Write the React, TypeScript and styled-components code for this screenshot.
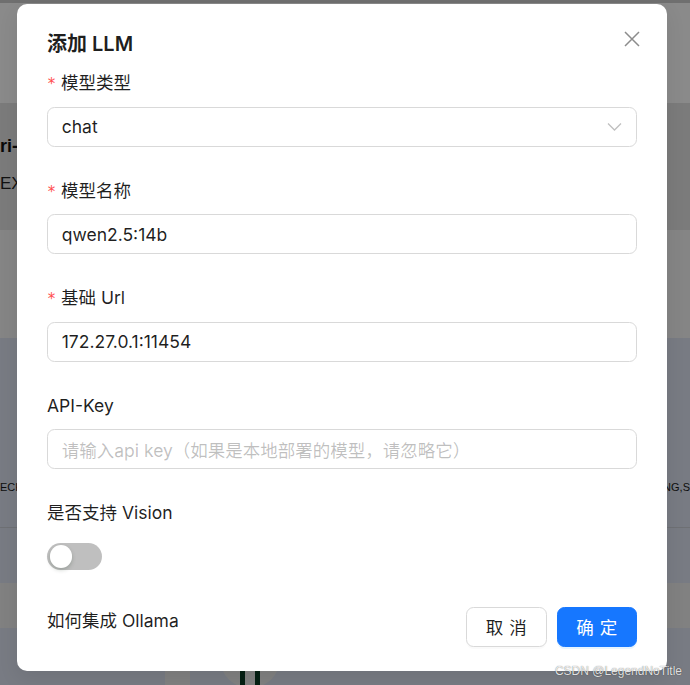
import React from "react";
import styled, { createGlobalStyle } from "styled-components";

const GlobalStyle = createGlobalStyle`
  html, body { margin: 0; padding: 0; }
  body {
    font-family: Inter, "Noto Sans CJK SC", "Noto Sans", sans-serif;
    overflow: hidden;
  }
  * { box-sizing: border-box; }
`;

/* ---------- background page ---------- */
const Page = styled.div`
  position: relative;
  width: 690px;
  height: 685px;
  display: flex;
  flex-direction: column;
  overflow: hidden;
  background: #ececec;
`;

const Band = styled.div<{ $h: number; $bg: string }>`
  height: ${(p) => p.$h}px;
  flex: none;
  background: ${(p) => p.$bg};
  display: flex;
  flex-direction: column;
  position: relative;
`;

const CardTitle = styled.div`
  margin: 31px 0 0 0;
  font: 700 18px/24px "Liberation Sans", Arial, sans-serif;
  color: #111;
  white-space: nowrap;
`;

const CardSub = styled.div`
  margin: 14px 0 0 0;
  font: 400 17px/24px "Liberation Sans", Arial, sans-serif;
  color: #222;
  white-space: nowrap;
`;

const TagRow = styled.div`
  margin-top: 142px;
  display: flex;
  justify-content: space-between;
  font: 400 11px/14px "Liberation Sans", Arial, sans-serif;
  color: #1a1a1a;
  white-space: nowrap;
`;

const Divider = styled.div`
  margin-top: 33px;
  height: 1px;
  background: #c8ccd4;
`;

const BottomRow = styled.div`
  display: flex;
  align-items: flex-start;
  height: 100%;
`;

const GrayBlock = styled.div`
  margin-left: 165px;
  width: 25px;
  height: 100%;
  background: #ececec;
`;

const Circle = styled.div`
  margin-left: 30px;
  width: 60px;
  height: 60px;
  border-radius: 50%;
  background: #ececec;
  display: flex;
  justify-content: center;
  gap: 10px;
  padding-top: 4px;
`;

const Stroke = styled.div<{ $h: number; $t: number }>`
  width: 5px;
  margin-top: ${(p) => p.$t}px;
  height: ${(p) => p.$h}px;
  border-radius: 2px;
  background: #0a3a24;
`;

const Mask = styled.div`
  position: absolute;
  inset: 0;
  background: rgba(0, 0, 0, 0.45);
`;

/* ---------- modal ---------- */
const ModalWrap = styled.div`
  position: absolute;
  inset: 0;
  padding: 4px 0 0 17px;
`;

const Modal = styled.div`
  position: relative;
  width: 650px;
  background: #fff;
  border-radius: 10px;
  padding: 25px 30px 24px;
  box-shadow: 0 7.5px 20px rgba(0, 0, 0, 0.08);
  color: rgba(0, 0, 0, 0.88);
`;

const Title = styled.div`
  font-size: 20px;
  line-height: 30px;
  font-weight: 600;
  margin-bottom: 10px;
  color: rgba(0, 0, 0, 0.88);
`;

const CloseBtn = styled.button`
  position: absolute;
  top: 21px;
  right: 21px;
  width: 28px;
  height: 28px;
  padding: 0;
  border: none;
  background: transparent;
  display: flex;
  align-items: center;
  justify-content: center;
  color: rgba(0, 0, 0, 0.45);
  cursor: pointer;
`;

const FormItem = styled.div`
  margin-bottom: 30px;
`;

const Label = styled.div`
  display: flex;
  align-items: center;
  height: 37.5px;
  padding-bottom: 10px;
  font-size: 17.5px;
  line-height: 27.5px;
  color: rgba(0, 0, 0, 0.88);
`;

const Required = styled.span`
  display: inline-block;
  width: 9px;
  margin-right: 5px;
  color: #ff4d4f;
  font-family: "DejaVu Sans", sans-serif;
  font-size: 15px;
  line-height: 1;
  text-align: center;
  transform: translateY(2px);
`;

const Field = styled.div<{ $placeholder?: boolean }>`
  position: relative;
  height: 40px;
  border: 1px solid #d9d9d9;
  border-radius: 7.5px;
  padding: 0 13.75px;
  display: flex;
  align-items: center;
  font-size: 17.5px;
  color: ${(p) => (p.$placeholder ? "rgba(0,0,0,0.25)" : "rgba(0,0,0,0.88)")};
  background: #fff;
  white-space: nowrap;
`;

const Arrow = styled.span`
  position: absolute;
  right: 14px;
  top: 50%;
  transform: translateY(-50%);
  display: flex;
  color: rgba(0, 0, 0, 0.25);
`;

const SwitchRow = styled.div`
  height: 40px;
  display: flex;
  align-items: center;
`;

const Switch = styled.div`
  position: relative;
  width: 55px;
  height: 27.5px;
  border-radius: 14px;
  background: rgba(0, 0, 0, 0.25);
`;

const Knob = styled.span`
  position: absolute;
  top: 2.5px;
  left: 2.5px;
  width: 22.5px;
  height: 22.5px;
  border-radius: 50%;
  background: #fff;
  box-shadow: 0 2px 4px rgba(0, 35, 11, 0.2);
`;

const Footer = styled.div`
  display: flex;
  justify-content: space-between;
  align-items: flex-start;
`;

const HelpText = styled.div`
  font-size: 17.5px;
  line-height: 27.5px;
  color: rgba(0, 0, 0, 0.88);
`;

const Buttons = styled.div`
  display: flex;
  gap: 10px;
`;

const Button = styled.button<{ $primary?: boolean }>`
  height: 40px;
  padding: 0 18.75px;
  border-radius: 7.5px;
  font-family: inherit;
  font-size: 17.5px;
  white-space: nowrap;
  border: 1px solid ${(p) => (p.$primary ? "#1677ff" : "#d9d9d9")};
  background: ${(p) => (p.$primary ? "#1677ff" : "#fff")};
  color: ${(p) => (p.$primary ? "#fff" : "rgba(0,0,0,0.88)")};
  box-shadow: ${(p) =>
    p.$primary ? "0 2px 0 rgba(5,145,255,0.1)" : "0 2px 0 rgba(0,0,0,0.02)"};
  cursor: pointer;
`;

const BtnText = styled.span`
  letter-spacing: 0.34em;
  margin-right: -0.34em;
`;

const Watermark = styled.div`
  position: absolute;
  right: 8px;
  bottom: 7px;
  font: 400 12px/14px "Liberation Sans", Arial, sans-serif;
  color: rgba(255, 255, 255, 0.85);
  text-shadow: 0 0 1px rgba(0, 0, 0, 0.6);
  white-space: nowrap;
`;

const CloseIcon = () => (
  <svg width="16" height="16" viewBox="0 0 16 16" fill="none">
    <path d="M1 1 L15 15 M15 1 L1 15" stroke="currentColor" strokeWidth="1.5" />
  </svg>
);

const DownIcon = () => (
  <svg width="15" height="9" viewBox="0 0 15 9" fill="none">
    <path d="M1 1 L7.5 7.5 L14 1" stroke="currentColor" strokeWidth="1.3" />
  </svg>
);

export default function App() {
  return (
    <>
      <GlobalStyle />
      <Page>
        <Band $h={3} $bg="#cacaca" />
        <Band $h={100} $bg="#fbfbfb" />
        <Band $h={127} $bg="#e0e0e0">
          <CardTitle>ri-G</CardTitle>
          <CardSub>EX</CardSub>
        </Band>
        <Band $h={108} $bg="#f2f2f2" />
        <Band $h={245} $bg="#dae1ee">
          <TagRow>
            <span>ECH</span>
            <span>ING,S</span>
          </TagRow>
          <Divider />
        </Band>
        <Band $h={45} $bg="#ececec" />
        <Band $h={57} $bg="#dae1ee">
          <BottomRow>
            <GrayBlock />
            <Circle>
              <Stroke $t={10} $h={50} />
              <Stroke $t={14} $h={46} />
            </Circle>
          </BottomRow>
        </Band>
        <Mask />
        <ModalWrap>
          <Modal>
            <Title>添加 LLM</Title>
            <CloseBtn aria-label="close">
              <CloseIcon />
            </CloseBtn>

            <FormItem>
              <Label>
                <Required>*</Required>模型类型
              </Label>
              <Field>
                chat
                <Arrow>
                  <DownIcon />
                </Arrow>
              </Field>
            </FormItem>

            <FormItem>
              <Label>
                <Required>*</Required>模型名称
              </Label>
              <Field>qwen2.5:14b</Field>
            </FormItem>

            <FormItem>
              <Label>
                <Required>*</Required>基础 Url
              </Label>
              <Field>172.27.0.1:11454</Field>
            </FormItem>

            <FormItem>
              <Label>API-Key</Label>
              <Field $placeholder>请输入api key（如果是本地部署的模型，请忽略它）</Field>
            </FormItem>

            <FormItem>
              <Label>是否支持 Vision</Label>
              <SwitchRow>
                <Switch>
                  <Knob />
                </Switch>
              </SwitchRow>
            </FormItem>

            <Footer>
              <HelpText>如何集成 Ollama</HelpText>
              <Buttons>
                <Button>
                  <BtnText>取消</BtnText>
                </Button>
                <Button $primary>
                  <BtnText>确定</BtnText>
                </Button>
              </Buttons>
            </Footer>
          </Modal>
        </ModalWrap>
        <Watermark>CSDN @LegendNoTitle</Watermark>
      </Page>
    </>
  );
}
